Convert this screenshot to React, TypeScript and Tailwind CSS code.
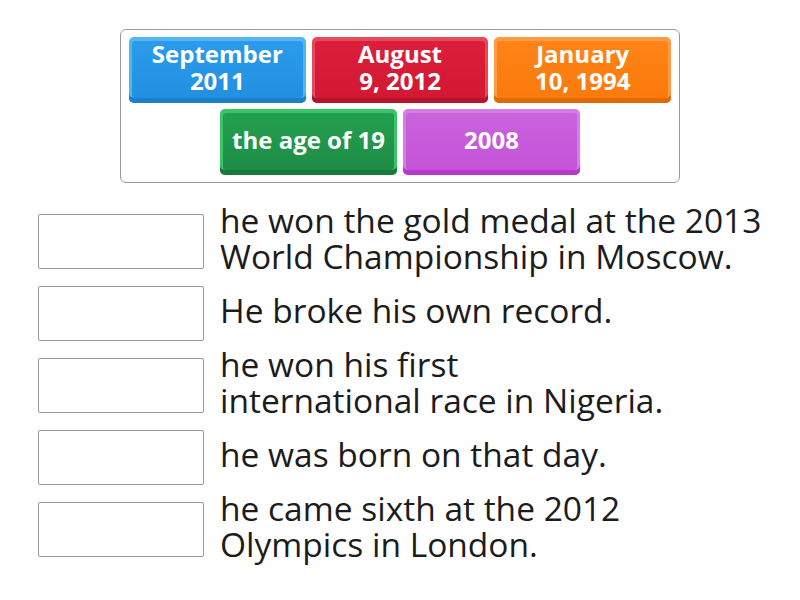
import React from "react";

type Tile = { lines: string[]; outer: string; inner: string; shadow: string };

const tiles1: Tile[] = [
  { lines: ["September", "2011"], outer: "bg-[#55b5f0]", inner: "bg-gradient-to-b from-[#2a9ceb] to-[#2290e0]", shadow: "shadow-[inset_0_-5px_0_#1b7fc9]" },
  { lines: ["August", "9, 2012"], outer: "bg-[#e5495e]", inner: "bg-gradient-to-b from-[#dc1f3a] to-[#d21833]", shadow: "shadow-[inset_0_-5px_0_#b3142b]" },
  { lines: ["January", "10, 1994"], outer: "bg-[#ff9b45]", inner: "bg-gradient-to-b from-[#ff8417] to-[#fb7a0c]", shadow: "shadow-[inset_0_-5px_0_#e06a08]" },
];
const tiles2: Tile[] = [
  { lines: ["the age of 19"], outer: "bg-[#3cc468]", inner: "bg-gradient-to-b from-[#22a04e] to-[#1f8d45]", shadow: "shadow-[inset_0_-5px_0_#1a7a3b]" },
  { lines: ["2008"], outer: "bg-[#d77ee6]", inner: "bg-gradient-to-b from-[#ca62dd] to-[#c453d8]", shadow: "shadow-[inset_0_-5px_0_#b638cc]" },
];

function TileBox({ t }: { t: Tile }) {
  return (
    <div className={`w-[177px] h-[66px] rounded-[5px] pt-[4px] px-[3px] pb-[5px] flex ${t.outer} ${t.shadow}`}>
      <div className={`flex-1 rounded-[3px] flex flex-col items-center justify-center pb-[5px] text-white font-bold text-[24px] leading-[27px] ${t.inner}`}>
        {t.lines.map((l, i) => (
          <span key={i}>{l}</span>
        ))}
      </div>
    </div>
  );
}

const rows: React.ReactNode[] = [
  <>he won the gold medal at the 2013<br />World Championship in Moscow.</>,
  <>He broke his own record.</>,
  <>he won his first<br />international race in Nigeria.</>,
  <>he was born on that day.</>,
  <>he came sixth at the 2012<br />Olympics in London.</>,
];

export default function App() {
  return (
    <div className="w-[800px] h-[600px] bg-white overflow-hidden" style={{ fontFamily: '"Open Sans", sans-serif' }}>
      <div className="pt-[29px] flex justify-center">
        <div className="w-[560px] h-[154px] border border-[#9a9a9a] rounded-[6px] px-[8px] pt-[7px] flex flex-col gap-[6px]">
          <div className="flex justify-center gap-[6px]">
            {tiles1.map((t, i) => (
              <TileBox key={i} t={t} />
            ))}
          </div>
          <div className="flex justify-center gap-[6px]">
            {tiles2.map((t, i) => (
              <TileBox key={i} t={t} />
            ))}
          </div>
        </div>
      </div>
      <div className="pt-[22px] pl-[38px] flex flex-col">
        {rows.map((r, i) => (
          <div key={i} className="h-[72px] flex items-center gap-[16px]">
            <div className="w-[166px] h-[55px] border border-[#9a9a9a] rounded-[2px] bg-white shrink-0" />
            <div className="text-[33.5px] leading-[36px] text-[#1c1c1c] pb-[7px] whitespace-nowrap">{r}</div>
          </div>
        ))}
      </div>
    </div>
  );
}
